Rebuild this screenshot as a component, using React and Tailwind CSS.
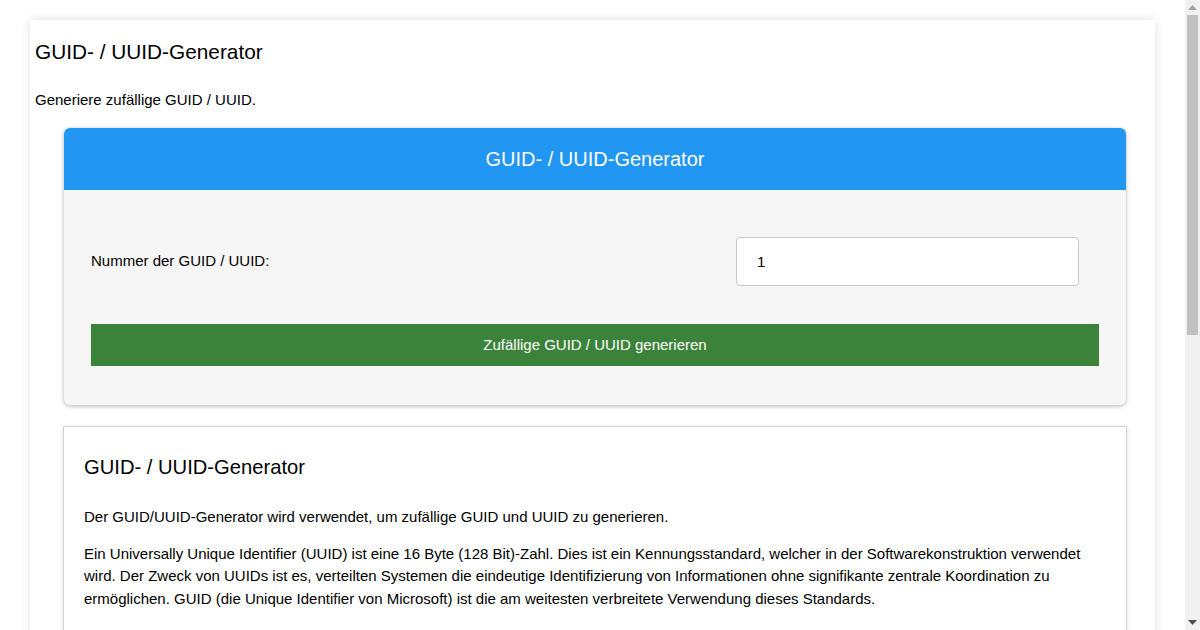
import { useState } from "react";

// Classic window scrollbar drawn next to the page
function Scrollbar() {
  return (
    <div className="w-[15px] shrink-0 bg-[#f1f1f1] flex flex-col items-center">
      <div className="h-[15px] w-full flex items-center justify-center">
        <svg width="9" height="5" viewBox="0 0 9 5">
          <polygon points="0,5 9,5 4.5,0" fill="#a3a3a3" />
        </svg>
      </div>
      <div className="w-[11px] h-[320px] bg-[#c1c1c1]" />
      <div className="flex-1" />
      <div className="h-[15px] w-full flex items-center justify-center">
        <svg width="9" height="5" viewBox="0 0 9 5">
          <polygon points="0,0 9,0 4.5,5" fill="#505050" />
        </svg>
      </div>
    </div>
  );
}

function App() {
  const [count, setCount] = useState("1");

  return (
    <div className="flex h-screen overflow-hidden bg-white font-['Liberation_Sans',Arial,sans-serif] text-black">
      <div className="flex-1 overflow-hidden pt-5 pb-10">
        <div className="mx-auto w-[1125px] bg-white shadow-[0_0_10px_rgba(0,0,0,0.12)] px-[5px] pb-10">
          <h1 className="text-[20.8px] leading-[23px] pt-[20px] pb-[28px]">GUID- / UUID-Generator</h1>
          <p className="text-[15px] leading-[17px] mb-[20px]">Generiere zufällige GUID / UUID.</p>

          <div className="ml-[29px] mr-[24px] rounded-md bg-[#f6f6f6] shadow-[0_1px_4px_rgba(0,0,0,0.3)] overflow-hidden">
            <div className="bg-[#2196f3] h-[62px] flex items-center justify-center text-white text-[20px]">
              GUID- / UUID-Generator
            </div>
            <div className="px-[27px] pt-[47px] pb-[39px]">
              <div className="flex items-center">
                <label className="flex-1 text-[15px]">Nummer der GUID / UUID:</label>
                <input
                  type="number"
                  value={count}
                  onChange={(e) => setCount(e.target.value)}
                  className="w-[343px] h-[49px] mr-[20px] bg-white border border-[#c8c8c8] rounded px-5 text-[15px] outline-none"
                />
              </div>
              <button className="mt-[38px] w-full h-[42px] bg-[#3b833a] text-white text-[15px]">
                Zufällige GUID / UUID generieren
              </button>
            </div>
          </div>

          <div className="ml-[28px] mr-[23px] mt-[21px] border border-[#d4d4d4] shadow-[0_1px_4px_rgba(0,0,0,0.15)] px-5 pt-[29px] pb-[120px] text-[15px] leading-[22.5px]">
            <h2 className="text-[20.2px] leading-[23px] mb-[27px]">GUID- / UUID-Generator</h2>
            <p className="mb-[14px]">
              Der GUID/UUID-Generator wird verwendet, um zufällige GUID und UUID zu generieren.
            </p>
            <p>
              Ein Universally Unique Identifier (UUID) ist eine 16 Byte (128 Bit)-Zahl. Dies ist ein Kennungsstandard, welcher in der Softwarekonstruktion verwendet wird. Der Zweck von UUIDs ist es, verteilten Systemen die eindeutige Identifizierung von Informationen ohne signifikante zentrale Koordination zu ermöglichen. GUID (die Unique Identifier von Microsoft) ist die am weitesten verbreitete Verwendung dieses Standards.
            </p>
          </div>
        </div>
      </div>
      <Scrollbar />
    </div>
  );
}

export default App;
